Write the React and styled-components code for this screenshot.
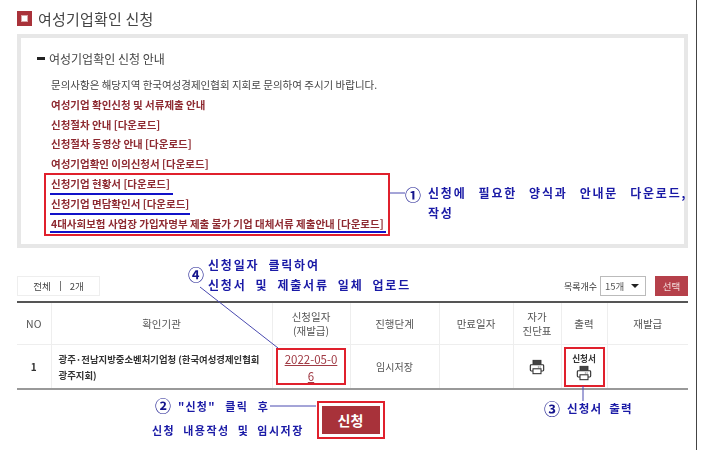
import React from 'react';
import styled, { createGlobalStyle } from 'styled-components';

const GlobalStyle = createGlobalStyle`
html, body {
  margin: 0;
  background: #fff;
}
body {
  font-family: "Noto Sans CJK KR", "Noto Sans", sans-serif;
  color: #333;
}
`;

const Page = styled.div`
position: relative;
box-sizing: border-box;
width: 697px;
height: 450px;
padding: 7px 8px 0 17px;
border-right: 1px solid #444;
overflow: hidden;
filter: blur(0.3px);
`;

const TitleRow = styled.div`
display: flex;
align-items: center;
gap: 6px;
height: 22px;
`;

const TitleMark = styled.span`
box-sizing: border-box;
width: 15px;
height: 15px;
border: 4px solid #a9323a;
background: #fff;
box-shadow: inset 0 0 0 1px #d9a5a8;
`;

const Title = styled.h1`
margin: 0;
font-size: 15px;
font-weight: 400;
color: #444;
letter-spacing: 0.2px;
`;

const GuideBox = styled.section`
box-sizing: border-box;
height: 214px;
margin-top: 5px;
padding: 10px 0 0 16px;
border: 4px solid #e7e7e7;
`;

const GuideHeading = styled.h2`
display: flex;
align-items: center;
gap: 4px;
margin: 0 0 7px;
height: 20px;
font-size: 12px;
font-weight: 400;
color: #444;
`;

const Dash = styled.span`
width: 8px;
height: 3px;
background: #222;
`;

const GuideList = styled.div`
padding-left: 14px;
`;

const GuideLine = styled.div`
position: relative;
width: max-content;
height: 19.8px;
line-height: 19.8px;
font-size: 10.5px;
font-weight: ${(p) => (p.$plain ? 400 : 700)};
color: ${(p) => (p.$plain ? '#444' : '#8e2a31')};
`;

const Underline = styled.span`
position: absolute;
left: -1px;
bottom: ${(p) => p.$bottom}px;
width: ${(p) => p.$width}px;
height: 2px;
background: #1212c8;
`;

const Toolbar = styled.div`
display: flex;
align-items: center;
height: 20px;
margin-top: 28px;
`;

const TotalBox = styled.div`
display: flex;
align-items: center;
justify-content: center;
gap: 9px;
box-sizing: border-box;
width: 83px;
height: 20px;
border: 1px solid #eee;
font-size: 9.5px;
color: #444;
`;

const Bar = styled.span`
width: 1px;
height: 10px;
background: #777;
`;

const CountLabel = styled.span`
margin-left: auto;
margin-right: 3px;
font-size: 9px;
color: #333;
`;

const CountSelect = styled.div`
display: flex;
align-items: center;
justify-content: space-between;
box-sizing: border-box;
width: 46px;
height: 20px;
padding: 0 6px 0 4px;
border: 1px solid #bbb;
font-size: 9.5px;
color: #555;
`;

const Caret = styled.span`
width: 0;
height: 0;
border-left: 4px solid transparent;
border-right: 4px solid transparent;
border-top: 4px solid #222;
`;

const PickButton = styled.button`
width: 33px;
height: 20px;
margin-left: 9px;
padding: 0;
border: 0;
background: #b5404a;
color: #f3dcdc;
font: inherit;
font-size: 9.5px;
`;

const Table = styled.table`
width: 671px;
margin-top: 5px;
border-collapse: collapse;
table-layout: fixed;
border-top: 2px solid #555;
border-bottom: 2px solid #999;
`;

const HeadCell = styled.th`
height: 41px;
padding: 0;
border-left: 1px solid #eee;
border-bottom: 1px solid #eee;
font-size: 10.5px;
font-weight: 400;
line-height: 14px;
color: #555;
&:first-child {
  border-left: 0;
}
`;

const Cell = styled.td`
height: 43px;
padding: 0 ${(p) => (p.$left ? '12px' : '0')} 0 ${(p) => (p.$left ? '7px' : '0')};
border-left: 1px solid #eee;
font-size: ${(p) => (p.$left ? '9.4px' : '10px')};
font-weight: ${(p) => (p.$strong ? 700 : 400)};
line-height: 16px;
color: ${(p) => (p.$strong ? '#333' : '#555')};
text-align: ${(p) => (p.$left ? 'left' : 'center')};
&:first-child {
  border-left: 0;
}
`;

const DateLink = styled.a`
display: block;
box-sizing: border-box;
width: 70px;
height: 37px;
margin: 0 auto;
padding: 1px 5px 0;
border: 2px solid #e0202c;
font-size: 11.5px;
line-height: 17px;
color: #a03a44;
text-decoration: underline;
word-break: break-all;
`;

const PrintOut = styled.div`
display: flex;
flex-direction: column;
align-items: center;
box-sizing: border-box;
width: 41px;
height: 40px;
margin: 0 auto;
padding-top: 2px;
border: 2px solid #e0202c;
font-size: 8.6px;
font-weight: 700;
line-height: 14px;
color: #333;
`;

const PrinterSvg = styled.svg`
display: block;
width: ${(p) => p.$size}px;
height: ${(p) => p.$size}px;
margin: 0 auto;
`;

const ApplyRow = styled.div`
display: flex;
justify-content: center;
margin-top: 11px;
padding-right: 4px;
`;

const ApplyFrame = styled.div`
box-sizing: border-box;
width: 68px;
height: 38px;
padding: 3px 3px;
border: 2px solid #e0202c;
`;

const ApplyButton = styled.button`
display: block;
width: 100%;
height: 100%;
padding: 0;
border: 0;
background: #a8323a;
color: #fff;
font: inherit;
font-size: 14px;
font-weight: 700;
`;

const RedOutline = styled.div`
position: absolute;
left: 44px;
top: 173px;
box-sizing: border-box;
width: 346px;
height: 63px;
border: 2px solid #e0202c;
`;

const Note = styled.div`
position: absolute;
left: ${(p) => p.$x}px;
top: ${(p) => p.$y}px;
font-size: ${(p) => p.$size || 12}px;
font-weight: 700;
line-height: ${(p) => p.$leading || 20}px;
letter-spacing: ${(p) => p.$spacing ?? 1.8}px;
word-spacing: ${(p) => p.$words ?? 4.5}px;
color: #1a1aa6;
white-space: pre;
`;

const NoteDigit = styled.div`
position: absolute;
left: ${(p) => p.$x}px;
top: ${(p) => p.$y}px;
font-size: 16px;
font-weight: 700;
line-height: 20px;
color: #14148c;
`;

const Leaders = styled.svg`
position: absolute;
left: 0;
top: 0;
width: 696px;
height: 450px;
pointer-events: none;
`;

function PrinterIcon({ size }) {
  return (
    <PrinterSvg $size={size} viewBox="0 0 18 18">
      <rect x="4.5" y="1.5" width="9" height="5" fill="#444" stroke="#333" />
      <rect x="1.5" y="6.5" width="15" height="7" rx="1" fill="#fff" stroke="#333" strokeWidth="1.3" />
      <path d="M10 9h4" stroke="#333" strokeWidth="1" strokeDasharray="1 1" />
      <rect x="4.5" y="11" width="9" height="5.5" fill="#fff" stroke="#333" strokeWidth="1.2" />
    </PrinterSvg>
  );
}

export default function App() {
  return (
    <Page>
      <GlobalStyle />
      <TitleRow>
        <TitleMark />
        <Title>여성기업확인 신청</Title>
      </TitleRow>

      <GuideBox>
        <GuideHeading>
          <Dash />
          여성기업확인 신청 안내
        </GuideHeading>
        <GuideList>
          <GuideLine $plain>문의사항은 해당지역 한국여성경제인협회 지회로 문의하여 주시기 바랍니다.</GuideLine>
          <GuideLine>여성기업 확인신청 및 서류제출 안내</GuideLine>
          <GuideLine>신청절차 안내 [다운로드]</GuideLine>
          <GuideLine>신청절차 동영상 안내 [다운로드]</GuideLine>
          <GuideLine>여성기업확인 이의신청서 [다운로드]</GuideLine>
          <GuideLine>
            신청기업 현황서 [다운로드]
            <Underline $width={123} $bottom={-1} />
          </GuideLine>
          <GuideLine>
            신청기업 면담확인서 [다운로드]
            <Underline $width={140} $bottom={-1} />
          </GuideLine>
          <GuideLine>
            4대사회보험 사업장 가입자명부 제출 불가 기업 대체서류 제출안내 [다운로드]
            <Underline $width={336} $bottom={0} />
          </GuideLine>
        </GuideList>
      </GuideBox>

      <Toolbar>
        <TotalBox>
          전체
          <Bar />
          2개
        </TotalBox>
        <CountLabel>목록개수</CountLabel>
        <CountSelect>
          15개
          <Caret />
        </CountSelect>
        <PickButton>선택</PickButton>
      </Toolbar>

      <Table>
        <colgroup>
          <col style={{ width: 34 }} />
          <col style={{ width: 221 }} />
          <col style={{ width: 78 }} />
          <col style={{ width: 89 }} />
          <col style={{ width: 74 }} />
          <col style={{ width: 48 }} />
          <col style={{ width: 46 }} />
          <col style={{ width: 81 }} />
        </colgroup>
        <thead>
          <tr>
            <HeadCell>NO</HeadCell>
            <HeadCell>확인기관</HeadCell>
            <HeadCell>
              신청일자
              <br />
              (재발급)
            </HeadCell>
            <HeadCell>진행단계</HeadCell>
            <HeadCell>만료일자</HeadCell>
            <HeadCell>
              자가
              <br />
              진단표
            </HeadCell>
            <HeadCell>출력</HeadCell>
            <HeadCell>재발급</HeadCell>
          </tr>
        </thead>
        <tbody>
          <tr>
            <Cell $strong>1</Cell>
            <Cell $left $strong>
              광주·전남지방중소벤처기업청 (한국여성경제인협회 광주지회)
            </Cell>
            <Cell>
              <DateLink>2022-05-06</DateLink>
            </Cell>
            <Cell>임시저장</Cell>
            <Cell />
            <Cell>
              <PrinterIcon size={16} />
            </Cell>
            <Cell>
              <PrintOut>
                신청서
                <PrinterIcon size={16} />
              </PrintOut>
            </Cell>
            <Cell />
          </tr>
        </tbody>
      </Table>

      <ApplyRow>
        <ApplyFrame>
          <ApplyButton>신청</ApplyButton>
        </ApplyFrame>
      </ApplyRow>

      <RedOutline />

      <Leaders viewBox="0 0 696 450">
        <path d="M390 193H405" stroke="#4a4ab0" strokeWidth="1" fill="none" />
        <path d="M200 287L278 348" stroke="#4a4ab0" strokeWidth="1" fill="none" />
        <path d="M583 386V401" stroke="#4a4ab0" strokeWidth="1" fill="none" />
        <path d="M270 406H316" stroke="#4a4ab0" strokeWidth="1" fill="none" />
      </Leaders>

      <NoteDigit $x={405} $y={184}>①</NoteDigit>
      <Note $x={428} $y={183} $words={7.5}>{'신청에 필요한 양식과 안내문 다운로드,\n작성'}</Note>
      <NoteDigit $x={188} $y={264}>④</NoteDigit>
      <Note $x={208} $y={255}>{'신청일자 클릭하여\n신청서 및 제출서류 일체 업로드'}</Note>
      <NoteDigit $x={544} $y={398}>③</NoteDigit>
      <Note $x={567} $y={398} $size={11.5} $spacing={1.2} $words={3}>신청서 출력</Note>
      <NoteDigit $x={155} $y={395}>②</NoteDigit>
      <Note $x={178} $y={396} $size={11} $spacing={1.2} $words={6}>"신청" 클릭 후</Note>
      <Note $x={152} $y={420} $size={11} $spacing={1.5} $words={4}>신청 내용작성 및 임시저장</Note>
    </Page>
  );
}
